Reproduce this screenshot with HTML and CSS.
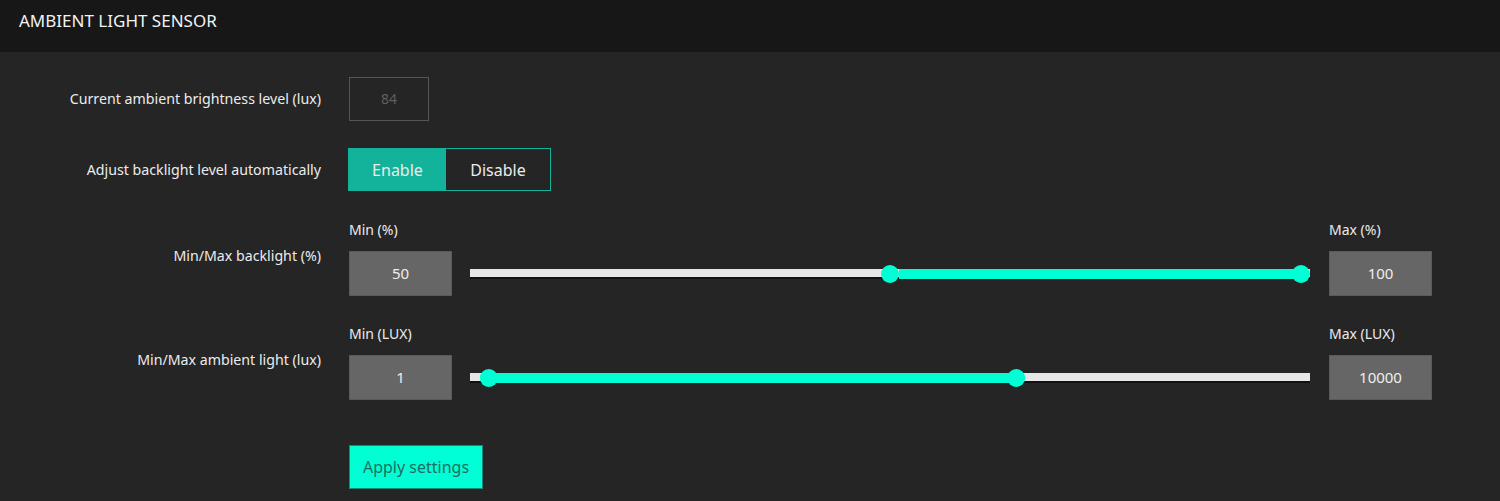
FILE: index.html
```html
<!DOCTYPE html>
<html>
<head>
<meta charset="utf-8">
<link rel="stylesheet" href="styles.css">
</head>
<body>
<div class="panel">
  <div class="header">AMBIENT LIGHT SENSOR</div>
  <div class="body">
    <div class="row row-lux">
      <div class="label">Current ambient brightness level (lux)</div>
      <div class="control"><div class="readonly">84</div></div>
    </div>
    <div class="row row-toggle">
      <div class="label">Adjust backlight level automatically</div>
      <div class="control">
        <div class="toggle">
          <div class="tbtn active">Enable</div>
          <div class="tbtn">Disable</div>
        </div>
      </div>
    </div>
    <div class="row row-range">
      <div class="label">Min/Max backlight (%)</div>
      <div class="control range">
        <div class="end">
          <div class="small">Min (%)</div>
          <div class="num">50</div>
        </div>
        <div class="slider">
          <div class="track">
            <div class="fill" style="left: 50%; right: 0%;"></div>
            <div class="thumb" style="left: 50%;"></div>
            <div class="thumb" style="left: 100%;"></div>
          </div>
        </div>
        <div class="end">
          <div class="small">Max (%)</div>
          <div class="num">100</div>
        </div>
      </div>
    </div>
    <div class="row row-range">
      <div class="label">Min/Max ambient light (lux)</div>
      <div class="control range">
        <div class="end">
          <div class="small">Min (LUX)</div>
          <div class="num">1</div>
        </div>
        <div class="slider">
          <div class="track">
            <div class="fill" style="left: 1.2%; right: 34.7%;"></div>
            <div class="thumb" style="left: 1.2%;"></div>
            <div class="thumb" style="left: 65.3%;"></div>
          </div>
        </div>
        <div class="end">
          <div class="small">Max (LUX)</div>
          <div class="num">10000</div>
        </div>
      </div>
    </div>
    <div class="row row-apply">
      <div class="label"></div>
      <div class="control"><div class="apply">Apply settings</div></div>
    </div>
  </div>
</div>
</body>
</html>
```
FILE: styles.css
```css
html, body {
  margin: 0;
  padding: 0;
  background: #252525;
  font-family: "Noto Sans", "Open Sans", sans-serif;
  color: #ececec;
}
.panel {
  width: 1500px;
  height: 501px;
  overflow: hidden;
}
.header {
  height: 52px;
  background: #171717;
  box-sizing: border-box;
  padding: 11px 0 0 19px;
  font-size: 17px;
  line-height: 20px;
  color: #f2f2f2;
}
.body {
  padding-top: 25px;
}
.row {
  display: flex;
  align-items: flex-start;
}
.label {
  width: 321px;
  flex: none;
  text-align: right;
  font-size: 14.2px;
  line-height: 18px;
}
.control {
  margin-left: 28px;
  flex: none;
}
.row-lux .label { padding-top: 13px; }
.readonly {
  width: 78px;
  height: 42px;
  border: 1px solid #555;
  box-sizing: content-box;
  color: #5f5f5f;
  font-size: 14px;
  line-height: 42px;
  text-align: center;
}
.row-toggle { margin-top: 27px; }
.row-toggle .label { padding-top: 13px; }
.row-toggle .control { margin-left: 27px; }
.toggle {
  display: flex;
  border: 1px solid #13b29a;
  height: 41px;
}
.tbtn {
  font-size: 16px;
  line-height: 42px;
  text-align: center;
  color: #ececec;
}
.tbtn.active {
  background: #13b29a;
  width: 97px;
}
.tbtn:not(.active) { width: 104px; }
.row-range { margin-top: 30px; }
.row-range .label { padding-top: 26px; }
.row-range + .row-range { margin-top: 29px; }
.range {
  display: flex;
  align-items: flex-end;
  width: 1083px;
}
.end { width: 103px; flex: none; }
.small {
  font-size: 14px;
  line-height: 18px;
  margin-bottom: 12px;
  white-space: nowrap;
}
.num {
  width: 101px;
  height: 43px;
  background: #666;
  border: 1px solid #5a5a5a;
  box-sizing: content-box;
  font-size: 15px;
  line-height: 43px;
  text-align: center;
  color: #eee;
}
.slider {
  flex: 1;
  margin: 0 19px 0 18px;
  height: 45px;
  position: relative;
}
.track {
  position: absolute;
  left: 0;
  right: 0;
  top: 18px;
  height: 8px;
  background: #e6e6e6;
  border-bottom: 2px solid #111;
}
.track .fill {
  position: absolute;
  top: 0;
  height: 10px;
  background: #00ffd5;
  margin: 0 9px;
}
.thumb {
  position: absolute;
  top: -4px;
  width: 18px;
  height: 18px;
  border-radius: 50%;
  background: #00ffd5;
  transform: translateX(calc(-1 * var(--p, 0) * 18px));
}
.thumb[style*="left: 50%"] { --p: 0.5; }
.thumb[style*="left: 100%"] { --p: 1; }
.thumb[style*="left: 1.2%"] { --p: 0.012; }
.thumb[style*="left: 65.3%"] { --p: 0.653; }
.row-apply { margin-top: 45px; }
.apply {
  width: 132px;
  height: 42px;
  background: #00ffd5;
  border: 1px solid #1b8a78;
  box-sizing: content-box;
  color: #1d6e62;
  font-size: 16px;
  line-height: 42px;
  text-align: center;
}
```
